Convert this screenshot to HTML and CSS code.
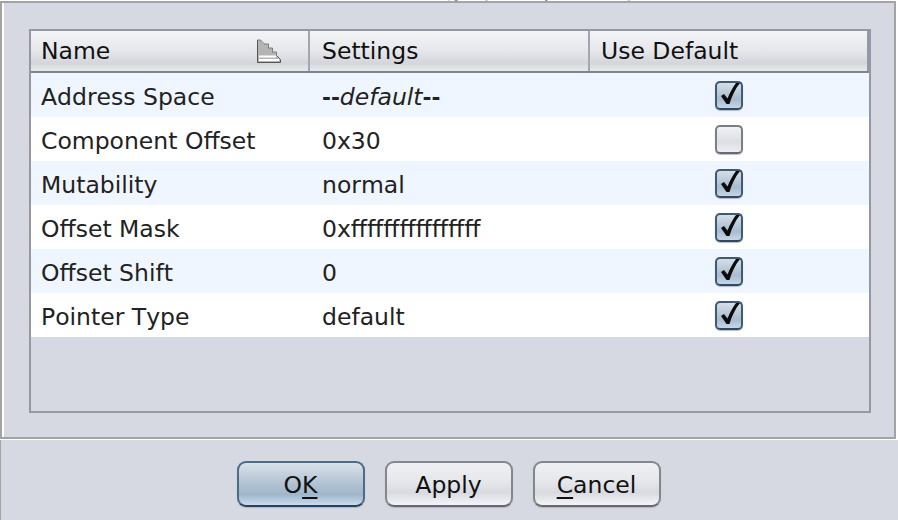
FILE: index.html
```html
<!DOCTYPE html>
<html lang="en">
<head>
<meta charset="utf-8">
<title>Settings</title>
<link rel="stylesheet" href="styles.css">
</head>
<body>
<div class="clipped-title">Pointer Data Settings (Component)</div>
<main class="panel">
  <section class="table">
    <div class="head">
      <div class="hcell c1">Name
        <svg class="sort" width="25" height="25" viewBox="0 0 25 25" aria-hidden="true">
          <path d="M1 1H4L8 5H12V9H16V13H20V17L24 21V24H1Z" fill="#b4b4b4"/>
          <path d="M1.500 1V23.500H24.500V20.500L20.500 16.500" fill="none" stroke="#555"/>
          <path d="M1.500 1H4.500L8.500 5M8 5H12.500V9M12 9H16.500V13M16 13H20.500V17" fill="none" stroke="#7c7c7c"/>
          <path d="M3 17.500H20M3 21H23" stroke="#fff" stroke-width="2"/>
        </svg>
      </div>
      <div class="hcell c2">Settings</div>
      <div class="hcell c3">Use Default</div>
    </div>
    <div class="row alt"><span class="c1 cell">Address Space</span><span class="c2 cell def"><b>--</b><i>default</i><b>--</b></span><span class="c3 cb on"><svg viewBox="0 0 28 28" width="28" height="28"><path class="tick" d="M6 13L9 11L12.500 15.500C15 9.500 18 4 21 0L25 0C20 6 16.500 14 14.500 21L11.500 21Z"/></svg></span></div>
    <div class="row"><span class="c1 cell">Component Offset</span><span class="c2 cell">0x30</span><span class="c3 cb"></span></div>
    <div class="row alt"><span class="c1 cell">Mutability</span><span class="c2 cell">normal</span><span class="c3 cb on"><svg viewBox="0 0 28 28" width="28" height="28"><path class="tick" d="M6 13L9 11L12.500 15.500C15 9.500 18 4 21 0L25 0C20 6 16.500 14 14.500 21L11.500 21Z"/></svg></span></div>
    <div class="row"><span class="c1 cell">Offset Mask</span><span class="c2 cell">0xffffffffffffffff</span><span class="c3 cb on"><svg viewBox="0 0 28 28" width="28" height="28"><path class="tick" d="M6 13L9 11L12.500 15.500C15 9.500 18 4 21 0L25 0C20 6 16.500 14 14.500 21L11.500 21Z"/></svg></span></div>
    <div class="row alt"><span class="c1 cell">Offset Shift</span><span class="c2 cell">0</span><span class="c3 cb on"><svg viewBox="0 0 28 28" width="28" height="28"><path class="tick" d="M6 13L9 11L12.500 15.500C15 9.500 18 4 21 0L25 0C20 6 16.500 14 14.500 21L11.500 21Z"/></svg></span></div>
    <div class="row"><span class="c1 cell">Pointer Type</span><span class="c2 cell">default</span><span class="c3 cb on"><svg viewBox="0 0 28 28" width="28" height="28"><path class="tick" d="M6 13L9 11L12.500 15.500C15 9.500 18 4 21 0L25 0C20 6 16.500 14 14.500 21L11.500 21Z"/></svg></span></div>
  </section>
</main>
<footer class="bar">
  <button class="btn primary">O<u>K</u></button>
  <button class="btn">Apply</button>
  <button class="btn"><u>C</u>ancel</button>
</footer>
</body>
</html>
```
FILE: styles.css
```css
* { box-sizing: border-box; }
html, body { margin: 0; padding: 0; }
body {
  width: 898px; height: 520px; overflow: hidden; position: relative;
  background: #fff;
  font-family: "DejaVu Sans", sans-serif; font-size: 23.5px; color: #222;
  font-kerning: none;
}
.clipped-title {
  position: absolute; left: 222px; top: -25px; font-size: 23.5px; line-height: 30px; color: #888; white-space: nowrap;
}
.panel {
  position: absolute; left: 0; top: 1px; width: 896px; height: 438px;
  background: #d6d9e1;
  border: 2px solid #a3a3a3;
  box-shadow: inset 2px 0 0 #fff;
  padding: 26px 23px 0 27px;
}
.table {
  height: 384px; width: 842px;
  border: 2px solid #9398a3;
}
.head {
  display: flex; height: 42px;
  border-bottom: 2px solid #7d8490;
  background: linear-gradient(#f3f4f6 0, #e6e7eb 50%, #d4d6db 80%, #e8e9ec 100%);
  color: #111;
}
.hcell { display: flex; align-items: center; padding-left: 10px; position: relative; }
.hcell.c1 { width: 279px; border-right: 2px solid #a3a6ae; }
.hcell.c2 { width: 280px; border-right: 2px solid #a3a6ae; padding-left: 12px; }
.hcell.c3 { width: 279px; border-right: 2px solid #9398a3; padding-left: 11px; }
.sort { position: absolute; left: 225px; top: 8px; }
.row { display: flex; height: 44px; align-items: center; background: #fff; }
.row.alt { background: #eff6ff; }
.cell { display: block; padding: 4px 0 0 10px; white-space: nowrap; }
.c1.cell { width: 280px; }
.c2.cell { width: 279px; padding-left: 11px; }
.def b { font-weight: bold; font-size: 21.5px; }
.def i { font-style: italic; }
.cb {
  display: block; width: 28px; height: 29px; margin-left: 125px; flex: none;
  border: 2px solid #7b7e87; border-bottom-color: #686b74; border-radius: 5px;
  background: linear-gradient(#f0f1f4, #dcdee4 60%, #eceef2);
  box-shadow: 0 1px 1px #b9bcc4;
}
.cb.on {
  border-color: #3f5a75; border-bottom-color: #2f4a66;
  background: linear-gradient(#d5dfe9, #a8bccf 65%, #c5d6e6);
}
.cb svg { display: block; margin: 0 0 0 -2px; overflow: visible; }
.tick { fill: #0b0b0b; }
.bar {
  position: absolute; left: 0; top: 440px; width: 898px; height: 80px;
  background: #d6d9e1;
  border-left: 1px solid #a3a3a3;
  padding: 21px 0 0 236px;
  display: flex; gap: 20px; align-items: flex-start;
}
.btn {
  width: 128px; height: 46px; padding: 2px 1px 0 0;
  font: inherit; color: #111;
  border: 2px solid #85878d; border-bottom-color: #66686e; border-radius: 9px;
  background: linear-gradient(#eff0f3, #e6e7eb 45%, #d8dae0 70%, #f2f4fa);
  box-shadow: 0 1px 1px #b3b6bf;
}
.btn.primary {
  border-color: #4d6a86; border-bottom-color: #27425f;
  background: linear-gradient(#d9e2ea, #adbfd0 55%, #9fb6ca 75%, #c9dcee);
}
u { text-decoration-thickness: 2px; text-underline-offset: 4px; }
```
